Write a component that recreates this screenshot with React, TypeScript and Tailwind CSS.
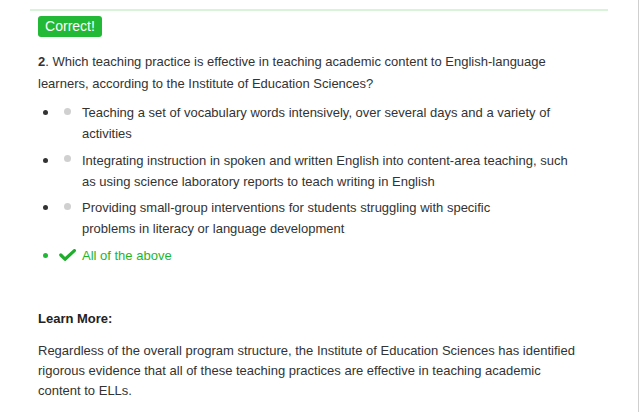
import React from 'react';

const options: { lines: string[]; correct: boolean }[] = [
  {
    lines: ['Teaching a set of vocabulary words intensively, over several days and a variety of activities'],
    correct: false,
  },
  {
    lines: ['Integrating instruction in spoken and written English into content-area teaching, such as using science laboratory reports to teach writing in English'],
    correct: false,
  },
  {
    lines: ['Providing small-group interventions for students struggling with specific', 'problems in literacy or language development'],
    correct: false,
  },
  { lines: ['All of the above'], correct: true },
];

function Check() {
  return (
    <svg width="17" height="12" viewBox="0 0 17 12" className="block">
      <path d="M1.8 6 L6 10.2 L15.4 1.6" fill="none" stroke="#1fae2b" strokeWidth="3.2" strokeLinecap="round" strokeLinejoin="round" />
    </svg>
  );
}

export default function App() {
  return (
    <div className="w-[640px] h-[412px] bg-white flex overflow-hidden" style={{ fontFamily: '"Liberation Sans", Arial, sans-serif' }}>
      <div className="flex-1 flex flex-col">
        {/* green rule */}
        <div className="ml-[30px] mt-[9px] w-[578px] h-[2px] bg-[#d9f2da]" />

        <div className="pl-[38px] pr-[30px]">
          <div className="mt-[5px] w-[64px] h-[21px] rounded-[3px] bg-[#21b935] text-white text-[14px] leading-[21px] text-center">
            Correct!
          </div>

          <p className="mt-[14px] text-[13px] leading-[22px] text-[#333] w-[540px]">
            <span className="font-bold">2</span>. Which teaching practice is effective in teaching academic content to English-language learners, according to the Institute of Education Sciences?
          </p>

          <ul className="mt-[7px] flex flex-col gap-[5.5px]">
            {options.map((o, i) => (
              <li key={i} className="flex items-start">
                <div className="w-[21px] h-[21px] flex items-center justify-start pl-[5px] shrink-0">
                  <span className={`block w-[5px] h-[5px] rounded-full ${o.correct ? 'bg-[#21b935]' : 'bg-[#333]'}`} />
                </div>
                <div className="w-[23px] h-[21px] flex items-center justify-start shrink-0">
                  {o.correct ? (
                    <Check />
                  ) : (
                    <span className="block w-[7px] h-[7px] rounded-full bg-[#d0d0d0] -mt-[3px] ml-[5px]" />
                  )}
                </div>
                <span
                  className={`text-[13px] leading-[21px] w-[492px] ${o.correct ? 'text-[#1fb52b]' : 'text-[#333]'}`}
                >
                  {o.lines.map((l, j) => (
                    <React.Fragment key={j}>
                      {j > 0 && <br />}
                      {l}
                    </React.Fragment>
                  ))}
                </span>
              </li>
            ))}
          </ul>

          <h3 className="mt-[43px] text-[13px] leading-[20px] font-bold text-[#222]">Learn More:</h3>
          <p className="mt-[12px] text-[13px] leading-[20px] text-[#333] w-[540px]">
            Regardless of the overall program structure, the Institute of Education Sciences has identified rigorous evidence that all of these teaching practices are effective in teaching academic content to ELLs.
          </p>
        </div>
      </div>
      <div className="w-[1px] h-full bg-[#cfcfcf] mr-[1px]" />
    </div>
  );
}
